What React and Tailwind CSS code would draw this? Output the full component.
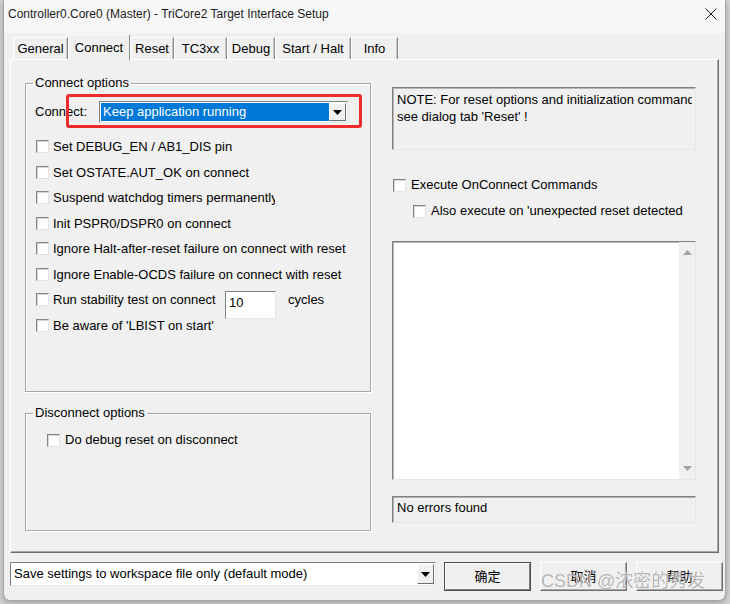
import React from "react";

// little 3D checkbox used all over the dialog
const Box = () => (
  <span className="w-[13px] h-[13px] shrink-0 bg-white border border-t-[#858585] border-l-[#858585] border-r-[#e2e2e2] border-b-[#e2e2e2] shadow-[inset_1px_1px_0_#d6d6d6]" />
);

const Check = ({ label, clip }) => (
  <div className="flex items-center h-[25.5px] gap-[4px]">
    <Box />
    <span className={clip ? "whitespace-nowrap overflow-hidden " + clip : "whitespace-nowrap"}>{label}</span>
  </div>
);

const Arrow = ({ color = "#000", up }) => (
  <svg width="9" height="5" viewBox="0 0 9 5">
    {up ? <path d="M0 5 L4.5 0 L9 5 Z" fill={color} /> : <path d="M0 0 L9 0 L4.5 5 Z" fill={color} />}
  </svg>
);

const tabs = [
  { name: "General", w: "w-[55px]" },
  { name: "Connect", w: "w-[62px]", active: true },
  { name: "Reset", w: "w-[44px]" },
  { name: "TC3xx", w: "w-[53px]" },
  { name: "Debug", w: "w-[48px]" },
  { name: "Start / Halt", w: "w-[76px]" },
  { name: "Info", w: "w-[47px]" },
];

const App = () => {
  return (
    <div className="w-[730px] h-[604px] bg-[#d3d3d3] flex overflow-hidden font-['Liberation_Sans',Arial,sans-serif] text-[13px] text-black">
      <div className="w-[3px] shrink-0" />
      <div className="w-[723px] h-[601px] flex flex-col bg-[#f0f0f0] border-l border-r border-b border-[#a6a6a6] rounded-b-[7px] shadow-[0_2px_6px_rgba(0,0,0,0.25)]">
        {/* title bar */}
        <div className="h-[33px] shrink-0 flex items-start justify-between pl-[4px] pr-[8px] pt-[6px] bg-[#f7f7f7]">
          <span className="text-[12px] leading-[16px] text-[#1b1b1b]">Controller0.Core0 (Master) - TriCore2 Target Interface Setup</span>
          <svg width="12" height="12" viewBox="0 0 12 12" className="mt-[2px]">
            <path d="M0.5 0.5 L11.5 11.5 M11.5 0.5 L0.5 11.5" stroke="#1b1b1b" strokeWidth="1" />
          </svg>
        </div>

        {/* tabs */}
        <div className="h-[26px] shrink-0 flex items-end pl-[9px]">
          {tabs.map((t) =>
            t.active ? (
              <div key={t.name} className={t.w + " h-[26px] -mb-[1px] relative z-10 bg-[#f0f0f0] border-t border-l border-white border-r border-r-[#8a8a8a] rounded-t-[2px] flex items-start justify-center pt-[3px]"}>
                {t.name}
              </div>
            ) : (
              <div key={t.name} className={t.w + " h-[22px] bg-[#f0f0f0] border-t border-l border-white border-r border-r-[#8a8a8a] shadow-[inset_-1px_0_0_#c8c8c8] flex items-center justify-center"}>
                {t.name}
              </div>
            )
          )}
        </div>

        {/* tab page */}
        <div className="ml-[6px] w-[709px] h-[494px] shrink-0 flex border border-t-white border-l-white border-r-[#6e6e6e] border-b-[#6e6e6e] shadow-[inset_-1px_-1px_0_#a8a8a8]">
          {/* left column */}
          <div className="w-[346px] ml-[14px] flex flex-col">
            <fieldset className="mt-[15px] h-[317px] border border-[#a8a8a8] shadow-[inset_1px_1px_0_#fff,1px_1px_0_#fff] min-w-0">
              <legend className="ml-[7px] px-[2px] leading-[16px]">Connect options</legend>
              <div className="relative mt-[10px] h-[22px] flex items-center pl-[9px]">
                <span className="w-[64px]">Connect:</span>
                <div className="w-[249px] h-[22px] flex bg-white border border-t-[#808080] border-l-[#808080] border-r-[#e6e6e6] border-b-[#e6e6e6] p-[1px]">
                  <div className="flex-1 bg-[#0078d7] text-white flex items-center pl-[2px] leading-[16px]">Keep application running</div>
                  <div className="w-[17px] flex items-center justify-center bg-[#f0f0f0] border border-t-white border-l-white border-r-[#6e6e6e] border-b-[#6e6e6e]">
                    <Arrow />
                  </div>
                </div>
                <div className="absolute left-[40px] top-[-7px] w-[296px] h-[34px] border-[3px] border-[#ee2b2b] rounded-[3px]" />
              </div>
              <div className="mt-[11px] pl-[10px] flex flex-col">
                <Check label="Set DEBUG_EN / AB1_DIS pin" />
                <Check label="Set OSTATE.AUT_OK on connect" />
                <Check label="Suspend watchdog timers permanently" clip="w-[222px]" />
                <Check label="Init PSPR0/DSPR0 on connect" />
                <Check label="Ignore Halt-after-reset failure on connect with reset" clip="w-[296px]" />
                <Check label="Ignore Enable-OCDS failure on connect with reset" />
                <div className="flex items-center h-[25.5px] gap-[4px]">
                  <Box />
                  <span className="whitespace-nowrap w-[168px]">Run stability test on connect</span>
                  <div className="self-start mt-[4px] w-[51px] h-[28px] shrink-0 bg-white border border-t-[#808080] border-l-[#808080] border-r-[#e6e6e6] border-b-[#e6e6e6] pl-[3px] pt-[3px] leading-[16px]">
                    10
                  </div>
                  <span className="ml-[8px]">cycles</span>
                </div>
                <Check label="Be aware of 'LBIST on start'" />
              </div>
            </fieldset>

            <fieldset className="mt-[13px] h-[126px] border border-[#a8a8a8] shadow-[inset_1px_1px_0_#fff,1px_1px_0_#fff] min-w-0">
              <legend className="ml-[7px] px-[2px] leading-[16px]">Disconnect options</legend>
              <div className="mt-[9px] pl-[21px] h-[20px] flex items-center gap-[5px]">
                <Box />
                <span>Do debug reset on disconnect</span>
              </div>
            </fieldset>
          </div>

          {/* right column */}
          <div className="w-[304px] ml-[21px] flex flex-col">
            <div className="mt-[27px] h-[63px] border border-t-[#808080] border-l-[#808080] border-r-[#e6e6e6] border-b-[#e6e6e6] shadow-[inset_1px_1px_0_#b4b4b4] pl-[4px] pt-[3px] pr-[3px] leading-[17px] overflow-hidden">
              <div className="whitespace-nowrap overflow-hidden">NOTE: For reset options and initialization commands</div>
              <div>see dialog tab 'Reset' !</div>
            </div>
            <div className="mt-[25px] h-[20px] flex items-center gap-[5px] pl-[1px]">
              <Box />
              <span>Execute OnConnect Commands</span>
            </div>
            <div className="mt-[6px] h-[20px] flex items-center gap-[5px] pl-[21px]">
              <Box />
              <span className="whitespace-nowrap">Also execute on 'unexpected reset detected</span>
            </div>
            <div className="mt-[20px] h-[239px] flex bg-white border border-t-[#808080] border-l-[#808080] border-r-[#e6e6e6] border-b-[#e6e6e6] shadow-[inset_1px_1px_0_#b4b4b4]">
              <div className="flex-1" />
              <div className="w-[16px] bg-[#f0f0f0] flex flex-col items-center justify-between py-[8px]">
                <Arrow color="#a3a3a3" up />
                <Arrow color="#a3a3a3" />
              </div>
            </div>
            <div className="mt-[16px] h-[27px] border border-t-[#808080] border-l-[#808080] border-r-[#e6e6e6] border-b-[#e6e6e6] shadow-[inset_1px_1px_0_#b4b4b4] pl-[4px] pt-[3px] leading-[16px]">
              No errors found
            </div>
          </div>
        </div>

        {/* bottom bar */}
        <div className="relative flex items-start pl-[6px] pt-[9px] gap-[8px]">
          <div className="w-[426px] h-[24px] flex bg-white border border-t-[#808080] border-l-[#808080] border-r-[#e6e6e6] border-b-[#e6e6e6] p-[1px]">
            <div className="flex-1 flex items-center pl-[2px] leading-[16px] whitespace-nowrap">Save settings to workspace file only (default mode)</div>
            <div className="w-[17px] flex items-center justify-center bg-[#f0f0f0] border border-t-white border-l-white border-r-[#6e6e6e] border-b-[#6e6e6e]">
              <Arrow />
            </div>
          </div>
          <div className="flex gap-[9px] font-['Liberation_Sans','Noto_Sans_CJK_SC',sans-serif]">
            <div className="w-[87px] h-[29px] border border-[#4a4a4a] p-0 flex">
              <div className="flex-1 flex items-center justify-center border border-t-white border-l-white border-r-[#808080] border-b-[#808080]">确定</div>
            </div>
            <div className="w-[87px] h-[29px] flex items-center justify-center border border-t-white border-l-white border-r-[#6e6e6e] border-b-[#6e6e6e] shadow-[inset_-1px_-1px_0_#a8a8a8]">取消</div>
            <div className="w-[87px] h-[29px] flex items-center justify-center border border-t-white border-l-white border-r-[#6e6e6e] border-b-[#6e6e6e] shadow-[inset_-1px_-1px_0_#a8a8a8]">帮助</div>
          </div>
          <div className="absolute left-[537px] top-[17px] text-[18px] leading-[22px] whitespace-nowrap text-[rgba(120,120,120,0.55)] [text-shadow:0_0_1px_#fff] font-['Liberation_Sans','Noto_Sans_CJK_SC',sans-serif]">
            CSDN @浓密的秀发
          </div>
        </div>
      </div>
    </div>
  );
};

export default App;
